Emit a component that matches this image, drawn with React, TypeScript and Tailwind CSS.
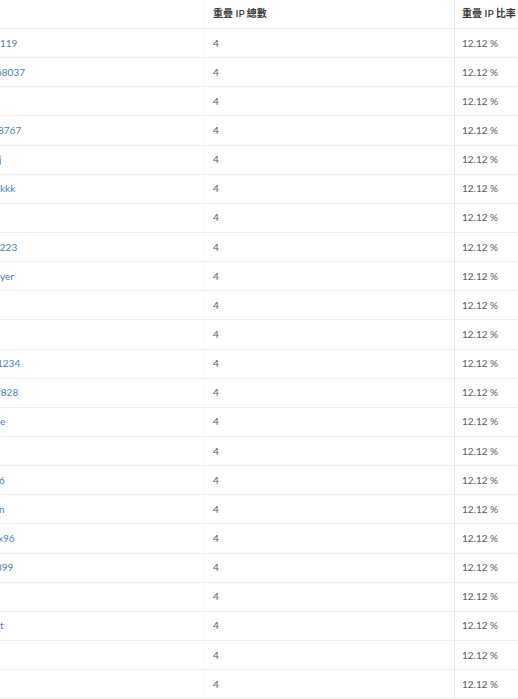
const rows: { name: string; cls: string }[] = [
  { name: "119", cls: "" },
  { name: "68037", cls: "-ml-[4px]" },
  { name: "", cls: "" },
  { name: "8767", cls: "-ml-[2px]" },
  { name: "j", cls: "-ml-[1px]" },
  { name: "kkk", cls: "" },
  { name: "", cls: "" },
  { name: "1223", cls: "-ml-[6px]" },
  { name: "yer", cls: "" },
  { name: "", cls: "" },
  { name: "", cls: "" },
  { name: "1234", cls: "-ml-[3px]" },
  { name: "9828", cls: "-ml-[5px]" },
  { name: "e", cls: "" },
  { name: "", cls: "" },
  { name: "6", cls: "-ml-[1px]" },
  { name: "n", cls: "-ml-[1px]" },
  { name: "x96", cls: "-ml-[2px]" },
  { name: "899", cls: "-ml-[4px]" },
  { name: "", cls: "" },
  { name: "t", cls: "" },
  { name: "", cls: "" },
  { name: "", cls: "" },
];

export default function App() {
  return (
    <div
      className="w-[518px] h-[699px] overflow-hidden bg-white text-[10px] text-[#5a5a5a]"
      style={{ fontFamily: "Lato, 'Noto Sans CJK TC', sans-serif" }}
    >
      <div className="grid grid-cols-[205px_250px_1fr] h-[29px] border-b border-[#ececec] items-center text-[#3a3a3a] font-semibold">
        <div className="h-full border-r border-[#f6f6f6]"></div>
        <div className="pl-2 pb-[2px] flex items-center h-full border-r border-[#e6e6e6]">
          重疊 IP 總數
        </div>
        <div className="pl-[7px] pb-[2px]">重疊 IP 比率</div>
      </div>
      {rows.map((r, i) => (
        <div
          key={i}
          className="grid grid-cols-[205px_250px_1fr] h-[29.15px] border-b border-[#efefef] items-center"
        >
          <div className="h-full flex items-center overflow-hidden border-r border-[#f6f6f6]">
            <a className={`block whitespace-nowrap text-[#4a80b8] ${r.cls}`}>
              {r.name}
            </a>
          </div>
          <div className="h-full flex items-center pl-2 border-r border-[#e6e6e6]">
            4
          </div>
          <div className="pl-[7px]">12.12 %</div>
        </div>
      ))}
    </div>
  );
}
